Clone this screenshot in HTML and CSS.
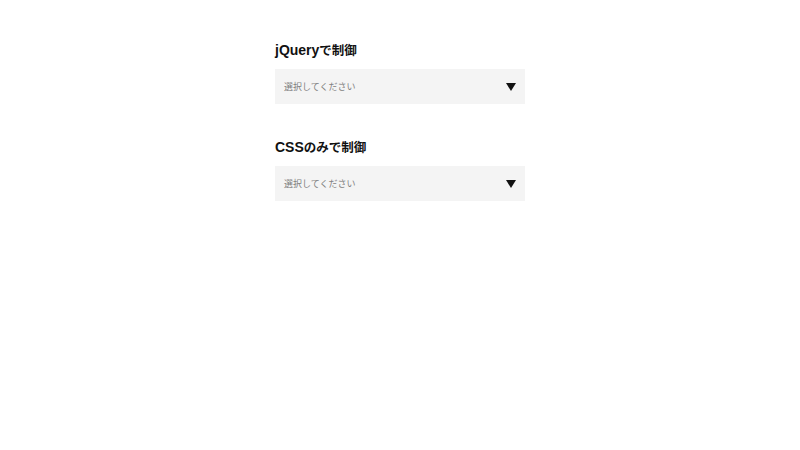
FILE: index.html
```html
<!DOCTYPE html>
<html lang="ja">
<head>
<meta charset="utf-8">
<link rel="stylesheet" href="styles.css">
</head>
<body>
<main class="wrap">
  <section class="group">
    <h2 class="title">jQuery<span class="ja">で制御</span></h2>
    <div class="select">
      <span class="placeholder">選択してください</span>
      <span class="arrow"></span>
    </div>
  </section>
  <section class="group">
    <h2 class="title">CSS<span class="ja">のみで制御</span></h2>
    <div class="select">
      <span class="placeholder">選択してください</span>
      <span class="arrow"></span>
    </div>
  </section>
</main>
</body>
</html>
```
FILE: styles.css
```css
html, body {
  margin: 0;
  padding: 0;
  background: #fff;
}
body {
  font-family: "Liberation Sans", "Noto Sans CJK JP", sans-serif;
  color: #111;
}
.wrap {
  width: 250px;
  margin: 0 auto;
  padding-top: 40px;
  display: flex;
  flex-direction: column;
  gap: 33px;
}
.title {
  margin: 0 0 9px;
  height: 20px;
  font-size: 14px;
  line-height: 20px;
  font-weight: bold;
}
.ja {
  font-size: 12.5px;
  line-height: 1;
}
.select {
  height: 35px;
  background: #f4f4f4;
  display: flex;
  align-items: center;
  justify-content: space-between;
  padding: 0 9px 0 9px;
  box-sizing: border-box;
}
.placeholder {
  font-size: 9px;
  color: #808080;
}
.arrow {
  width: 0;
  height: 0;
  border-left: 5px solid transparent;
  border-right: 5px solid transparent;
  border-top: 8px solid #111;
}
```
